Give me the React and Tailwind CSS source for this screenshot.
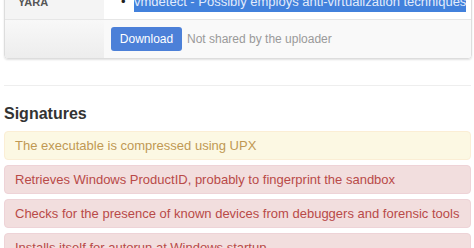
const alerts = [
  { text: 'Retrieves Windows ProductID, probably to fingerprint the sandbox' },
  { text: 'Checks for the presence of known devices from debuggers and forensic tools' },
  { text: 'Installs itself for autorun at Windows startup' },
];

const App = () => {
  return (
    <div className="w-[474px] h-[248px] overflow-hidden bg-white font-['Liberation_Sans',Arial,sans-serif] text-[13px] text-[#333]">
      <div className="ml-[4px] w-[468px] -mt-[21px] border border-[#dddddd] rounded-b-[4px] overflow-hidden shadow-[0_1px_2px_rgba(0,0,0,0.12)]">
        <div className="flex">
          <div className="w-[99px] shrink-0 bg-[#f4f4f4] pt-[12px] pb-[7px] pl-[13px] leading-[20px] text-[11px] font-bold text-[#555] uppercase">
            Yara
          </div>
          <div className="flex-1 bg-white pt-[12px] pb-[7px] pl-[17px] leading-[20px] text-[13px] flex">
            <span className="w-[13px] shrink-0 text-[#222]">•</span>
            <span className="bg-[#4281dc] text-[#e3ecfb] whitespace-nowrap">
              vmdetect - Possibly employs anti-virtualization techniques
            </span>
          </div>
        </div>
        <div className="flex border-t border-[#e6e6e6]">
          <div className="w-[99px] shrink-0 bg-gradient-to-b from-[#f8f8f8] to-[#ededed]"></div>
          <div className="flex-1 bg-[#f9f9f9] py-[7px] pl-[7px] flex items-center">
            <button className="w-[71px] h-[24px] rounded-[3px] bg-[#4c80d8] text-white text-[12px] flex items-center justify-center">
              Download
            </button>
            <span className="ml-[5px] text-[12px] text-[#9a9a9a]">Not shared by the uploader</span>
          </div>
        </div>
      </div>

      <div className="ml-[4px] w-[467px] mt-[26px] h-px bg-[#eeeeee]"></div>

      <h3 className="ml-[4px] mt-[18px] text-[16px] leading-[20px] font-bold text-[#333]">Signatures</h3>

      <div className="ml-[4px] w-[467px] mt-[7px] flex flex-col gap-[5px]">
        <div className="h-[29px] shrink-0 flex items-center px-[10px] rounded-[4px] border border-[#fbeed5] bg-[#fcf8e3] text-[#c09853]">
          The executable is compressed using UPX
        </div>
        {alerts.map((a) => (
          <div
            key={a.text}
            className="h-[29px] shrink-0 flex items-center px-[10px] rounded-[4px] border border-[#eed3d7] bg-[#f2dede] text-[#b94a48] whitespace-nowrap"
          >
            {a.text}
          </div>
        ))}
      </div>
    </div>
  );
};

export default App;
